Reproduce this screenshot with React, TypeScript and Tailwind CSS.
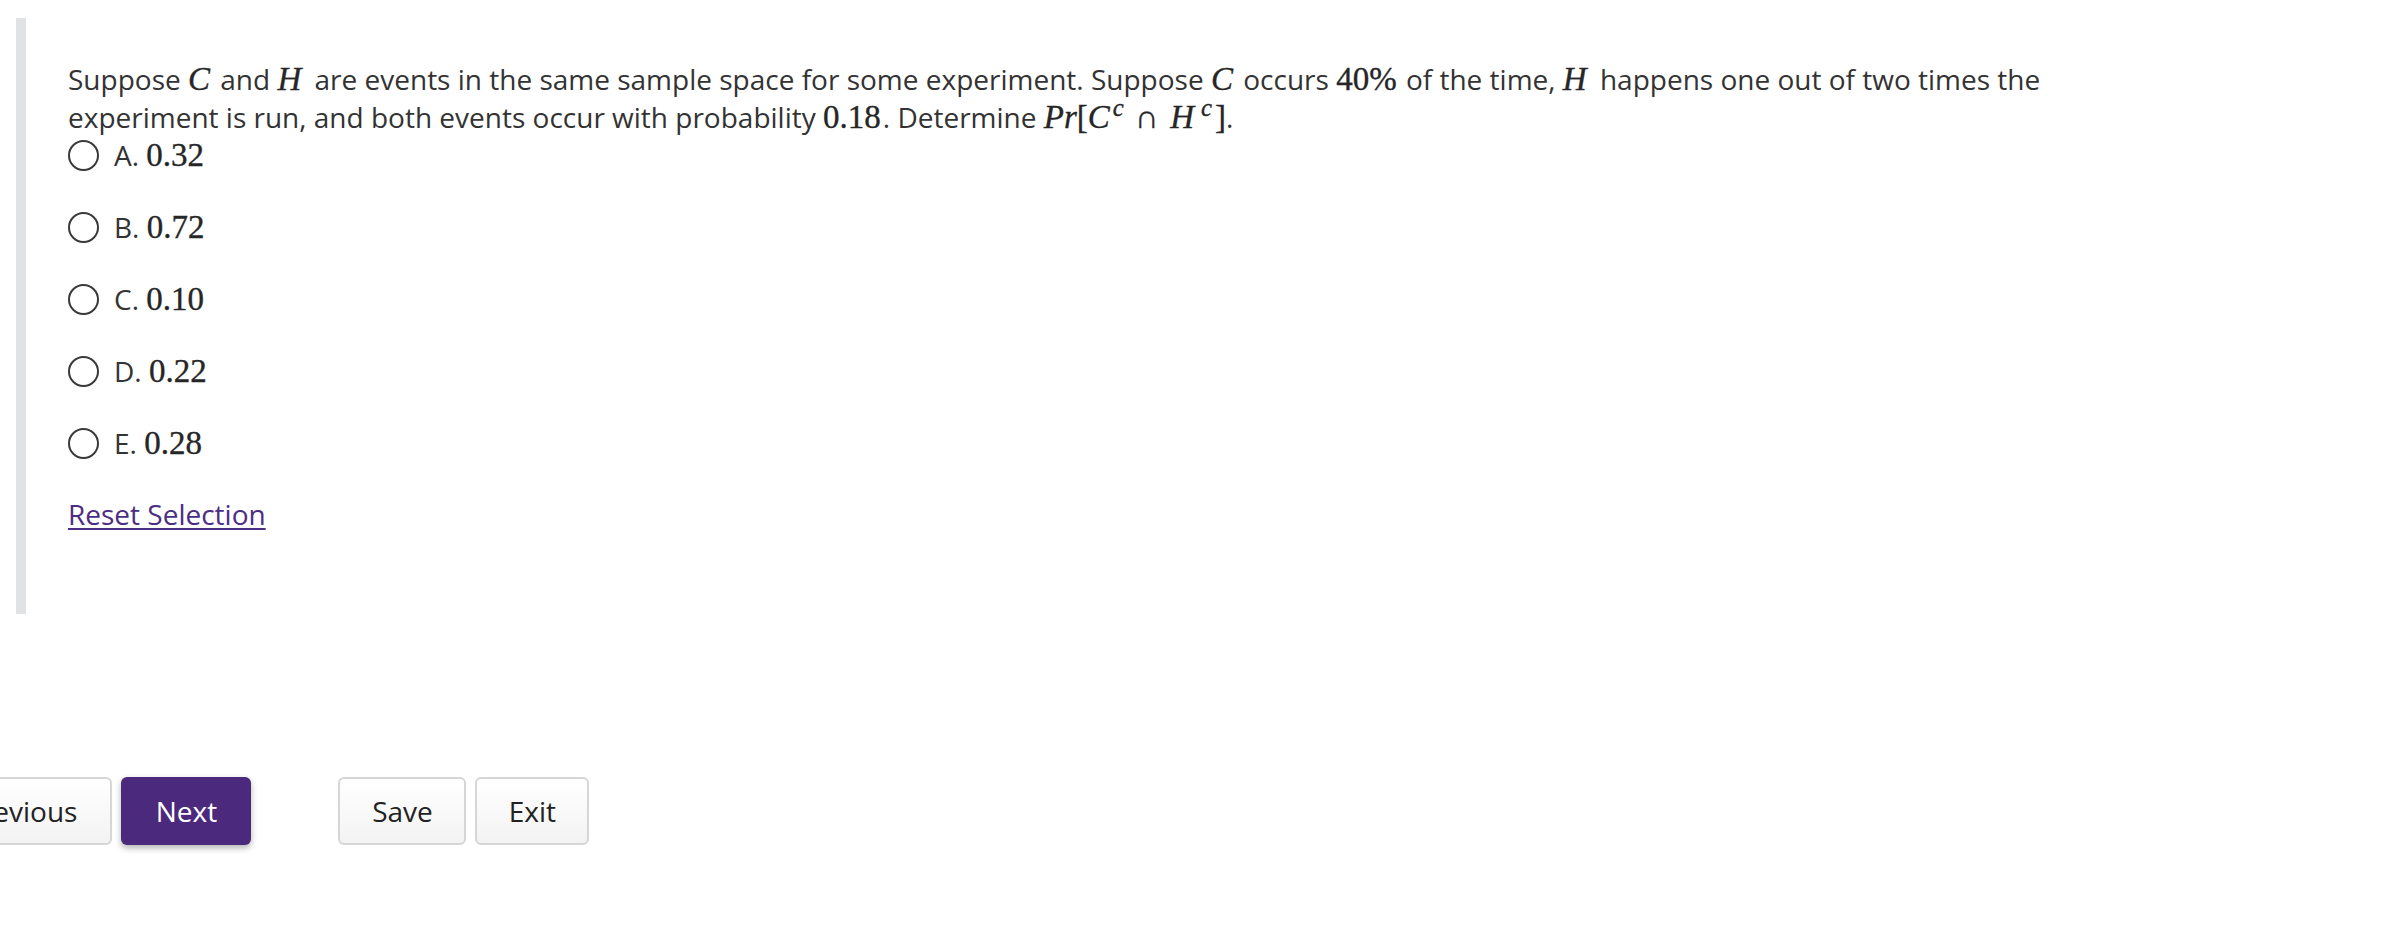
import React from "react";

const serif = "font-['Liberation_Serif','Times_New_Roman',serif]";

function M({ children, it = false, pr = "" }: { children: React.ReactNode; it?: boolean; pr?: string }) {
  return (
    <span
      className={`${serif} text-[33px] leading-[0] text-[#262626] [-webkit-text-stroke:0.35px_#262626] ${
        it ? "italic" : ""
      } ${pr}`}
    >
      {children}
    </span>
  );
}

const options: [string, string][] = [
  ["A.", "0.32"],
  ["B.", "0.72"],
  ["C.", "0.10"],
  ["D.", "0.22"],
  ["E.", "0.28"],
];

export default function App() {
  return (
    <div className="min-h-[946px] w-full overflow-hidden bg-white font-['Open_Sans',sans-serif] text-[#333333]">
      <div className="pl-4 pt-[18px]">
        <div className="h-[596px] w-[2200px] border-l-[10px] border-[#e1e2e4] pl-[42px] pt-[42px]">
          <p className="text-[28px] leading-[38px]">
            Suppose <M it pr="pr-[3px]">C</M> and <M it pr="pr-[6px]">H</M> are events in the same sample space for
            some experiment. Suppose <M it pr="pr-[3px]">C</M> occurs <M pr="pr-[2px]">40%</M> of the time,{" "}
            <M it pr="pr-[6px]">H</M> happens one out of two times the
            <br />
            experiment is run, and both events occur with probability <M pr="pr-[2px]">0.18</M>. Determine{" "}
            <M>
              <i>Pr</i>[<i className="pr-[3px]">C</i>
              <sup className="italic">c</sup>
            </M>{" "}
            <M pr="px-[4px]">∩</M>{" "}
            <M>
              <i className="pr-[3px]">H</i>
              <sup className="italic pl-[4px] pr-[3px]">c</sup>]
            </M>
            .
          </p>
          <div className="flex flex-col gap-[34px]">
            {options.map(([l, v]) => (
              <div key={l} className="flex h-[38px] items-center">
                <span className="box-border h-[31px] w-[31px] shrink-0 rounded-full border-2 border-[#3a3a3a] bg-white" />
                <span className="ml-[15px] text-[28px] leading-[38px]">
                  {l} <M>{v}</M>
                </span>
              </div>
            ))}
          </div>
          <div className="mt-[33px] text-[28px] leading-[38px]">
            <a href="#" className="text-[#4b2e83] underline decoration-2 underline-offset-[3px]">
              Reset Selection
            </a>
          </div>
        </div>
      </div>
      <div className="-ml-[70px] mt-[163px] flex items-center text-[28px] text-[#222222]">
        <button className="box-border flex h-[68px] items-center rounded-[6px] border-2 border-[#d6d6d6] bg-linear-to-b from-white to-[#f3f3f3] px-[33px]">
          Previous
        </button>
        <button className="ml-[9px] box-border flex h-[68px] w-[130px] items-center justify-center rounded-[6px] bg-[#4b2a7e] text-white shadow-[0_3px_6px_rgba(0,0,0,0.3)]">
          Next
        </button>
        <button className="ml-[87px] box-border flex h-[68px] w-[128px] items-center justify-center rounded-[6px] border-2 border-[#d6d6d6] bg-linear-to-b from-white to-[#f3f3f3]">
          Save
        </button>
        <button className="ml-[9px] box-border flex h-[68px] w-[114px] items-center justify-center rounded-[6px] border-2 border-[#d6d6d6] bg-linear-to-b from-white to-[#f3f3f3]">
          Exit
        </button>
      </div>
    </div>
  );
}
